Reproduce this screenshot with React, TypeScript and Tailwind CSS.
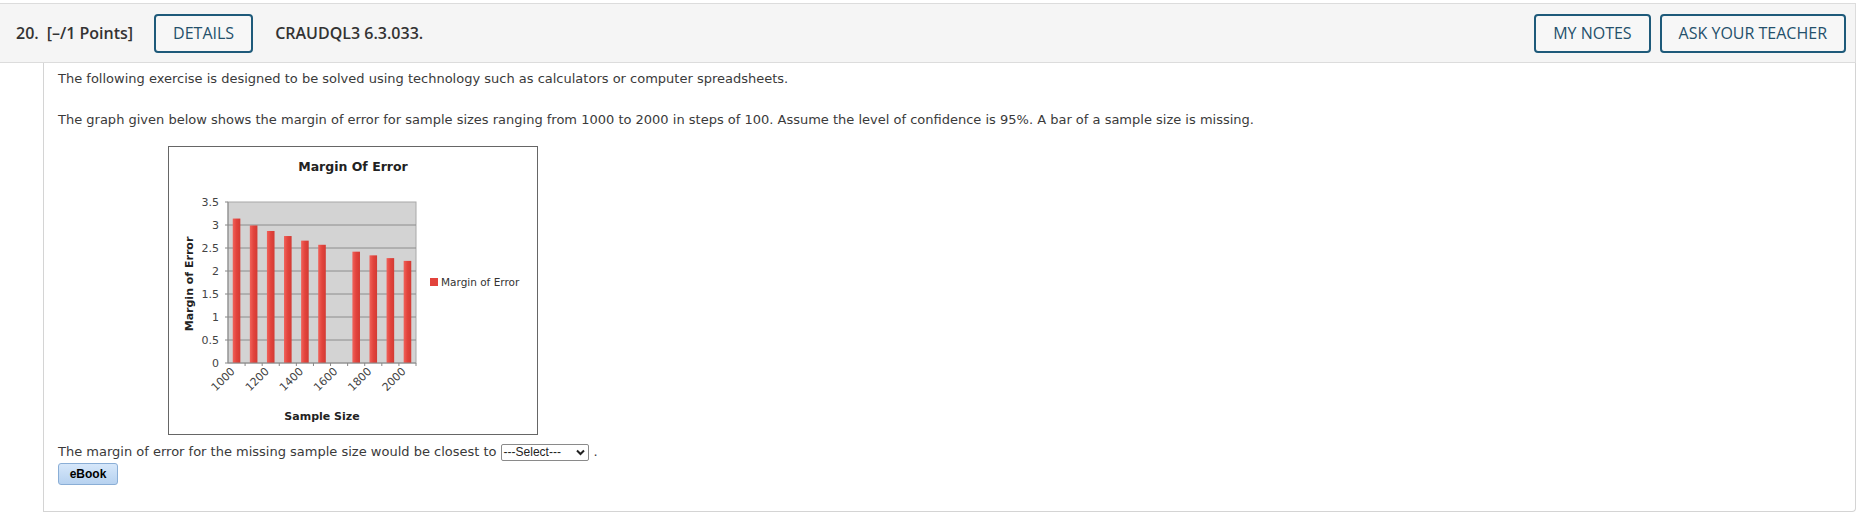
import React from 'react';

const bars: (number | null)[] = [3.14, 2.99, 2.87, 2.76, 2.66, 2.57, null, 2.42, 2.34, 2.28, 2.22];

const PLOT_X = 59;
const PLOT_Y = 55;
const PLOT_W = 188;
const PLOT_H = 161;
const MAX = 3.5;

function MarginChart() {
  const step = PLOT_W / bars.length;
  const yFor = (v: number) => PLOT_Y + PLOT_H - (v / MAX) * PLOT_H;
  const ticks = [0, 0.5, 1, 1.5, 2, 2.5, 3, 3.5];

  return (
    <svg width="368" height="287" viewBox="0 0 368 287" style={{ fontFamily: '"DejaVu Sans", Verdana, sans-serif' }}>
      <defs>
        <linearGradient id="bar" x1="0" x2="1" y1="0" y2="0">
          <stop offset="0" stopColor="#f0625a" />
          <stop offset="0.5" stopColor="#e2433c" />
          <stop offset="1" stopColor="#d33a33" />
        </linearGradient>
      </defs>
      <text x="184" y="24" textAnchor="middle" fontSize="12.5" fontWeight="bold" fill="#222">
        Margin Of Error
      </text>

      <rect x={PLOT_X} y={PLOT_Y} width={PLOT_W} height={PLOT_H} fill="#d3d3d3" stroke="#a8a8a8" />
      {ticks.slice(1, -1).map((t) => (
        <line key={t} x1={PLOT_X} x2={PLOT_X + PLOT_W} y1={yFor(t)} y2={yFor(t)} stroke="#8c8c8c" />
      ))}
      {ticks.map((t) => (
        <g key={'y' + t}>
          <line x1={PLOT_X - 3} x2={PLOT_X} y1={yFor(t)} y2={yFor(t)} stroke="#888" />
          <text x="50" y={yFor(t) + 4} textAnchor="end" fontSize="11" fill="#444">
            {t}
          </text>
        </g>
      ))}

      {bars.map((v, i) =>
        v === null ? null : (
          <rect
            key={i}
            x={PLOT_X + i * step + step / 2 - 3.8}
            y={yFor(v)}
            width="7.6"
            height={PLOT_Y + PLOT_H - yFor(v)}
            fill="url(#bar)"
          />
        ),
      )}

      <line x1={PLOT_X} x2={PLOT_X} y1={PLOT_Y} y2={PLOT_Y + PLOT_H} stroke="#8a8a8a" />
      <line x1={PLOT_X} x2={PLOT_X + PLOT_W} y1={PLOT_Y + PLOT_H} y2={PLOT_Y + PLOT_H} stroke="#8a8a8a" />
      {bars.map((_, i) => (
        <line
          key={'t' + i}
          x1={PLOT_X + (i + 1) * step}
          x2={PLOT_X + (i + 1) * step}
          y1={PLOT_Y + PLOT_H}
          y2={PLOT_Y + PLOT_H + 3}
          stroke="#888"
        />
      ))}

      {[1000, 1200, 1400, 1600, 1800, 2000].map((label, k) => {
        const cx = PLOT_X + k * 2 * step + step / 2 - 1;
        const cy = PLOT_Y + PLOT_H + 9;
        return (
          <text
            key={label}
            x={cx}
            y={cy}
            textAnchor="end"
            fontSize="11"
            fill="#444"
            transform={`rotate(-45 ${cx} ${cy})`}
          >
            {label}
          </text>
        );
      })}

      <text x="153" y="273" textAnchor="middle" fontSize="11" fontWeight="bold" fill="#222">
        Sample Size
      </text>
      <text
        x="20"
        y="137"
        textAnchor="middle"
        fontSize="11"
        fontWeight="bold"
        fill="#222"
        transform="rotate(-90 20 137)"
        dy="4"
      >
        Margin of Error
      </text>

      <rect x="261" y="131" width="8" height="8" fill="#e2433c" />
      <text x="272" y="139" fontSize="10.5" fill="#333">
        Margin of Error
      </text>
    </svg>
  );
}

function OutlineButton({ children }: { children: React.ReactNode }) {
  return (
    <button
      type="button"
      className="flex h-[39px] items-center justify-center rounded-[4px] border-2 border-[#1e5a7a] bg-[#f7f7f7] px-[17px] text-[16px] text-[#24506b]"
    >
      {children}
    </button>
  );
}

export default function App() {
  return (
    <div className="w-[1856px] bg-white pt-[3px]" style={{ fontFamily: '"Open Sans", sans-serif' }}>
      <header className="flex h-[60px] items-center border-y border-r border-[#dcdcdc] bg-[#f5f5f5] pl-[16px] pr-[9px]">
        <span className="text-[16px] font-semibold text-[#333]">20.</span>
        <span className="ml-[8px] text-[16px] font-semibold text-[#333]">[–/1 Points]</span>
        <div className="ml-[21px]">
          <OutlineButton>DETAILS</OutlineButton>
        </div>
        <span className="ml-[22px] text-[16px] font-semibold text-[#333]">CRAUDQL3 6.3.033.</span>
        <div className="ml-auto flex gap-[9px]">
          <OutlineButton>MY NOTES</OutlineButton>
          <OutlineButton>ASK YOUR TEACHER</OutlineButton>
        </div>
      </header>

      <section
        className="ml-[43px] rounded-br-[4px] border-x border-b border-[#d4d4d4] pb-[26px] pl-[14px] text-[13px] leading-[16px] text-[#3a3a3a]"
        style={{ fontFamily: '"DejaVu Sans", Verdana, sans-serif' }}
      >
        <p className="pt-[8px]">
          The following exercise is designed to be solved using technology such as calculators or computer spreadsheets.
        </p>
        <p className="mt-[25px]">
          The graph given below shows the margin of error for sample sizes ranging from 1000 to 2000 in steps of 100. Assume
          the level of confidence is 95%. A bar of a sample size is missing.
        </p>

        <div className="ml-[110px] mt-[18px] w-[370px] border border-[#666] bg-white">
          <MarginChart />
        </div>

        <div className="mt-[7px] flex h-[20px] items-center">
          <span>The margin of error for the missing sample size would be closest to</span>
          <div
            className="ml-[4px] flex h-[17px] w-[88px] items-center justify-between rounded-[2px] border border-[#8a8a8a] bg-white pl-[2px] pr-[3px] text-[12px] text-[#222]"
            style={{ fontFamily: '"Liberation Sans", Arial, sans-serif' }}
          >
            <span>---Select---</span>
            <svg width="9" height="7" viewBox="0 0 9 7">
              <path d="M1 1.5 L4.5 5 L8 1.5" fill="none" stroke="#222" strokeWidth="2" />
            </svg>
          </div>
          <span className="ml-[5px]">.</span>
        </div>

        <button
          type="button"
          className="mt-[1px] flex h-[22px] w-[60px] items-center justify-center rounded-[3px] border border-[#8aaed6] bg-gradient-to-b from-[#d6e7fa] to-[#b7d2f0] text-[12px] font-bold text-black"
          style={{ fontFamily: '"Liberation Sans", Arial, sans-serif' }}
        >
          eBook
        </button>
      </section>
    </div>
  );
}
